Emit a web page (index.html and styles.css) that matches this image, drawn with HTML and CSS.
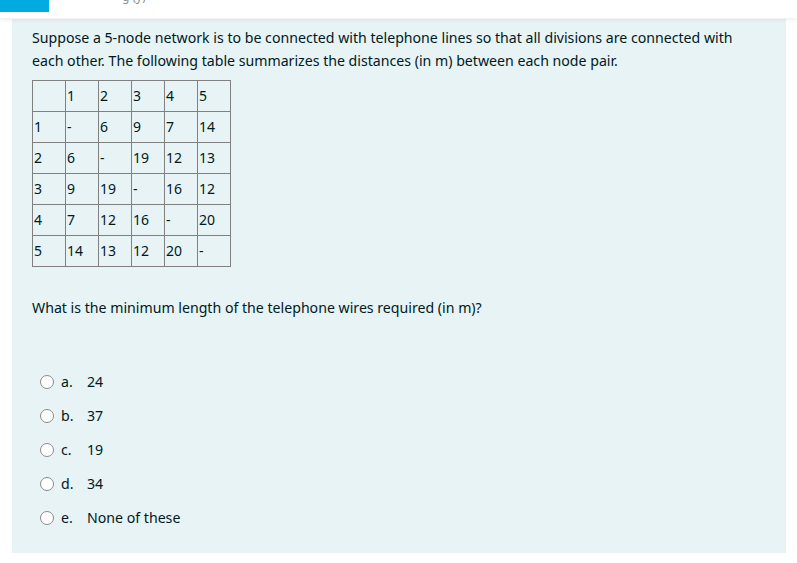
FILE: index.html
```html
<!DOCTYPE html>
<html>
<head>
<meta charset="utf-8">
<link rel="stylesheet" href="styles.css">
</head>
<body>
<header class="topbar">
  <div class="tab"></div>
  <div class="cut">g (y)</div>
</header>
<main class="page">
  <section class="qtext">
    <p class="intro">Suppose a 5-node network is to be connected with telephone lines so that all divisions are connected with each other. The following table summarizes the distances (in m) between each node pair.</p>
    <table class="dist">
      <tr><td></td><td>1</td><td>2</td><td>3</td><td>4</td><td>5</td></tr>
      <tr><td>1</td><td>-</td><td>6</td><td>9</td><td>7</td><td>14</td></tr>
      <tr><td>2</td><td>6</td><td>-</td><td>19</td><td>12</td><td>13</td></tr>
      <tr><td>3</td><td>9</td><td>19</td><td>-</td><td>16</td><td>12</td></tr>
      <tr><td>4</td><td>7</td><td>12</td><td>16</td><td>-</td><td>20</td></tr>
      <tr><td>5</td><td>14</td><td>13</td><td>12</td><td>20</td><td>-</td></tr>
    </table>
    <p class="ask">What is the minimum length of the telephone wires required (in m)?</p>
    <div class="answers">
      <label class="opt"><span class="radio"></span><span class="letter">a.</span><span class="val">24</span></label>
      <label class="opt"><span class="radio"></span><span class="letter">b.</span><span class="val">37</span></label>
      <label class="opt"><span class="radio"></span><span class="letter">c.</span><span class="val">19</span></label>
      <label class="opt"><span class="radio"></span><span class="letter">d.</span><span class="val">34</span></label>
      <label class="opt"><span class="radio"></span><span class="letter">e.</span><span class="val">None of these</span></label>
    </div>
  </section>
</main>
</body>
</html>
```
FILE: styles.css
```css
html, body {
  margin: 0;
  padding: 0;
  background: #ffffff;
}
body {
  font-family: "Noto Sans", "Open Sans", sans-serif;
  font-size: 14.15px;
  color: #001a1e;
}
.topbar {
  position: relative;
  height: 18px;
  background: #ffffff;
  box-shadow: 0 2px 4px rgba(0, 0, 0, 0.07);
  overflow: hidden;
  display: flex;
  align-items: flex-start;
  z-index: 1;
}
.tab {
  width: 49px;
  height: 12px;
  background: #00abe0;
}
.cut {
  margin-left: 73px;
  margin-top: -12px;
  font-size: 12px;
  color: #8a9296;
}
.page {
  padding: 1px 11px 0 12px;
}
.qtext {
  background: #e7f3f5;
  height: 534px;
  box-sizing: border-box;
  padding: 7px 20px 0 20px;
}
.intro {
  margin: 0;
  line-height: 23px;
}
.dist {
  border-collapse: collapse;
  margin-top: 8px;
}
.dist td {
  border: 1px solid #808080;
  width: 33px;
  height: 31px;
  padding: 0 0 0 1px;
  box-sizing: border-box;
  vertical-align: middle;
  line-height: 16px;
  font-size: 14px;
}
.ask {
  margin: 30px 0 0 0;
  line-height: 21px;
}
.answers {
  margin-top: 53px;
  padding-left: 8px;
  display: flex;
  flex-direction: column;
  gap: 13px;
}
.opt {
  display: flex;
  align-items: center;
  height: 21px;
}
.radio {
  width: 14px;
  height: 14px;
  border: 1px solid #8a8a8a;
  border-radius: 50%;
  background: #ffffff;
  box-sizing: border-box;
  margin-right: 7px;
}
.letter {
  width: 26px;
}
```
